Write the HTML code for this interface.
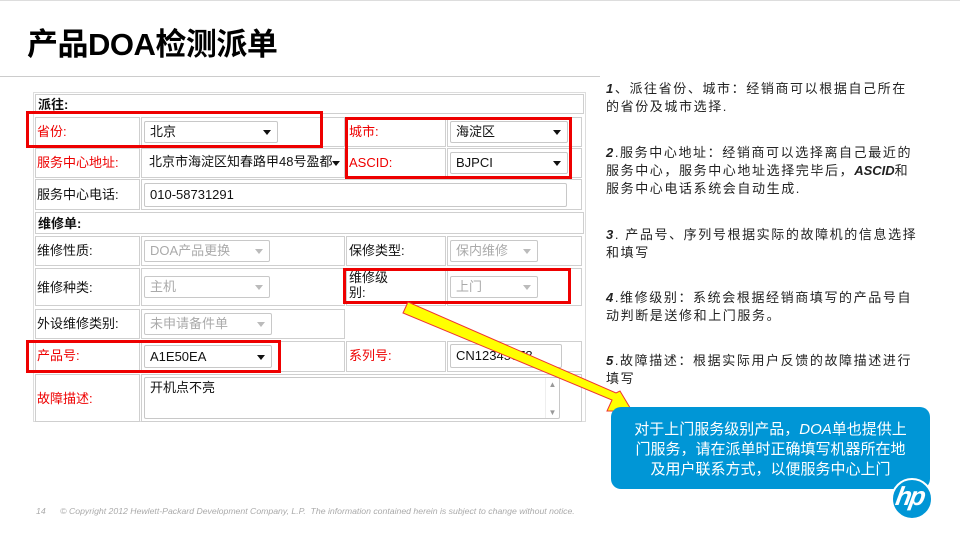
<!DOCTYPE html>
<html><head><meta charset="utf-8"><style>
*{margin:0;padding:0;box-sizing:border-box}
body{width:960px;height:543px;background:#fff;position:relative;overflow:hidden;font-family:"Liberation Sans","Noto Sans CJK SC",sans-serif}
.a{position:absolute}
.c{position:absolute;border:1px solid #cfcfcf;background:#fff}
.l{position:absolute;font-size:13px;color:#111;white-space:nowrap;line-height:16px}
.r{color:#e00}
.in{position:absolute;border:1px solid #c8c8c8;border-radius:2px;background:#fff;font-size:13px;color:#111;padding-left:5px;white-space:nowrap;overflow:hidden}
.g{color:#aaa}
.ar{position:absolute;right:6px;top:50%;margin-top:-2px;width:0;height:0;border-left:4px solid transparent;border-right:4px solid transparent;border-top:5px solid #111}
.ag{border-top-color:#bbb}
.rb{position:absolute;border:3px solid #e00}
.t{position:absolute;left:606px;font-size:13px;line-height:18px;color:#222;width:312px;letter-spacing:1.6px}
</style></head><body>
<div class="a" style="left:0;top:0;width:960px;height:1px;background:#ddd"></div>
<div class="a" style="left:27px;top:19px;font-size:31px;font-weight:bold;color:#000;letter-spacing:-0.5px">产品DOA检测派单</div>
<div class="a" style="left:0;top:76px;width:600px;height:1px;background:#ccc"></div>

<div class="c" style="left:33px;top:92px;width:553px;height:330px;border-color:#ddd"></div>
<div class="c" style="left:35px;top:94px;width:549px;height:20px"></div>
<div class="l" style="left:38px;top:97px;font-weight:bold">派往:</div>

<div class="c" style="left:35px;top:117px;width:105px;height:30px"></div>
<div class="l r" style="left:37px;top:124px">省份:</div>
<div class="c" style="left:141px;top:117px;width:204px;height:30px"></div>
<div class="in" style="left:144px;top:121px;width:134px;height:22px;line-height:20px">北京<span class="ar"></span></div>
<div class="c" style="left:346px;top:117px;width:100px;height:30px"></div>
<div class="l r" style="left:349px;top:124px">城市:</div>
<div class="c" style="left:447px;top:117px;width:135px;height:30px"></div>
<div class="in" style="left:450px;top:121px;width:118px;height:22px;line-height:20px">海淀区<span class="ar"></span></div>

<div class="c" style="left:35px;top:148px;width:105px;height:30px"></div>
<div class="l r" style="left:37px;top:155px">服务中心地址:</div>
<div class="c" style="left:141px;top:148px;width:204px;height:30px"></div>
<div class="in" style="left:144px;top:152px;width:199px;height:22px;line-height:20px;border:none">北京市海淀区知春路甲48号盈都<span class="ar" style="right:3px"></span></div>
<div class="c" style="left:346px;top:148px;width:100px;height:30px"></div>
<div class="l r" style="left:349px;top:155px">ASCID:</div>
<div class="c" style="left:447px;top:148px;width:135px;height:30px"></div>
<div class="in" style="left:450px;top:152px;width:118px;height:22px;line-height:20px">BJPCI<span class="ar"></span></div>

<div class="c" style="left:35px;top:179px;width:105px;height:31px"></div>
<div class="l" style="left:37px;top:187px">服务中心电话:</div>
<div class="c" style="left:141px;top:179px;width:441px;height:31px"></div>
<div class="in" style="left:144px;top:183px;width:423px;height:24px;line-height:22px">010-58731291</div>

<div class="c" style="left:35px;top:212px;width:549px;height:22px"></div>
<div class="l" style="left:38px;top:216px;font-weight:bold">维修单:</div>

<div class="c" style="left:35px;top:236px;width:105px;height:30px"></div>
<div class="l" style="left:37px;top:243px">维修性质:</div>
<div class="c" style="left:141px;top:236px;width:204px;height:30px"></div>
<div class="in g" style="left:144px;top:240px;width:126px;height:22px;line-height:20px">DOA产品更换<span class="ar ag"></span></div>
<div class="c" style="left:346px;top:236px;width:100px;height:30px"></div>
<div class="l" style="left:349px;top:243px">保修类型:</div>
<div class="c" style="left:447px;top:236px;width:135px;height:30px"></div>
<div class="in g" style="left:450px;top:240px;width:88px;height:22px;line-height:20px">保内维修<span class="ar ag"></span></div>

<div class="c" style="left:35px;top:268px;width:105px;height:38px"></div>
<div class="l" style="left:37px;top:280px">维修种类:</div>
<div class="c" style="left:141px;top:268px;width:204px;height:38px"></div>
<div class="in g" style="left:144px;top:276px;width:126px;height:22px;line-height:20px">主机<span class="ar ag"></span></div>
<div class="c" style="left:346px;top:268px;width:100px;height:38px"></div>
<div class="l" style="left:349px;top:270px;line-height:15px">维修级<br>别:</div>
<div class="c" style="left:447px;top:268px;width:135px;height:38px"></div>
<div class="in g" style="left:450px;top:276px;width:88px;height:22px;line-height:20px">上门<span class="ar ag"></span></div>

<div class="c" style="left:35px;top:309px;width:105px;height:30px"></div>
<div class="l" style="left:37px;top:316px">外设维修类别:</div>
<div class="c" style="left:141px;top:309px;width:204px;height:30px"></div>
<div class="in g" style="left:144px;top:313px;width:128px;height:22px;line-height:20px">未申请备件单<span class="ar ag"></span></div>

<div class="c" style="left:35px;top:341px;width:105px;height:31px"></div>
<div class="l r" style="left:37px;top:348px">产品号:</div>
<div class="c" style="left:141px;top:341px;width:204px;height:31px"></div>
<div class="in" style="left:144px;top:345px;width:128px;height:23px;line-height:21px">A1E50EA<span class="ar"></span></div>
<div class="c" style="left:346px;top:341px;width:100px;height:31px"></div>
<div class="l r" style="left:349px;top:348px">系列号:</div>
<div class="c" style="left:447px;top:341px;width:135px;height:31px"></div>
<div class="in" style="left:450px;top:344px;width:112px;height:24px;line-height:22px">CN12345678</div>

<div class="c" style="left:35px;top:374px;width:105px;height:48px"></div>
<div class="l r" style="left:37px;top:391px">故障描述:</div>
<div class="c" style="left:141px;top:374px;width:441px;height:48px"></div>
<div class="in" style="left:144px;top:377px;width:416px;height:42px;line-height:20px">开机点不亮
<span style="position:absolute;right:0;top:0;width:14px;height:40px;border-left:1px solid #eee;color:#999;font-size:8px;text-align:center;line-height:14px">▲<br><br>▼</span></div>

<div class="rb" style="left:26px;top:111px;width:297px;height:37px"></div>
<div class="rb" style="left:345px;top:117px;width:227px;height:62px"></div>
<div class="rb" style="left:343px;top:268px;width:228px;height:36px"></div>
<div class="rb" style="left:26px;top:340px;width:255px;height:33px"></div>

<svg class="a" style="left:0;top:0" width="960" height="543">
<polygon points="408,302 403,313 612,400 607,411 632,411 620,391 616,393" fill="#ffff00" stroke="#e33" stroke-width="1"/>
</svg>

<div class="t" style="top:80px"><i><b>1</b></i>、派往省份、城市：经销商可以根据自己所在的省份及城市选择.</div>
<div class="t" style="top:144px"><i><b>2</b></i>.服务中心地址：经销商可以选择离自己最近的服务中心，服务中心地址选择完毕后，<i><b style="letter-spacing:0">ASCID</b></i>和服务中心电话系统会自动生成.</div>
<div class="t" style="top:226px"><i><b>3</b></i>. 产品号、序列号根据实际的故障机的信息选择和填写</div>
<div class="t" style="top:289px"><i><b>4</b></i>.维修级别：系统会根据经销商填写的产品号自动判断是送修和上门服务。</div>
<div class="t" style="top:352px"><i><b>5</b></i>.故障描述：根据实际用户反馈的故障描述进行填写</div>

<div class="a" style="left:611px;top:407px;width:319px;height:82px;background:#0096d6;border-radius:10px;color:#fff;font-size:15px;line-height:20px;text-align:center;padding-top:13px">对于上门服务级别产品，<i>DOA</i>单也提供上<br>门服务，请在派单时正确填写机器所在地<br>及用户联系方式，以便服务中心上门</div>
<div class="a" style="left:891px;top:478px;width:42px;height:42px;border-radius:50%;background:#0096d6;border:2px solid #fff"></div>
<div class="a" style="left:896px;top:481px;color:#fff;font-size:26px;font-style:italic;font-weight:bold;letter-spacing:-2px;transform:skewX(-10deg)">hp</div>

<div class="a" style="left:36px;top:506px;font-size:8.7px;font-style:italic;color:#aaa;white-space:nowrap">14 &nbsp;&nbsp;&nbsp;&nbsp; © Copyright 2012 Hewlett-Packard Development Company, L.P. &nbsp;The information contained herein is subject to change without notice.</div>
</body></html>
